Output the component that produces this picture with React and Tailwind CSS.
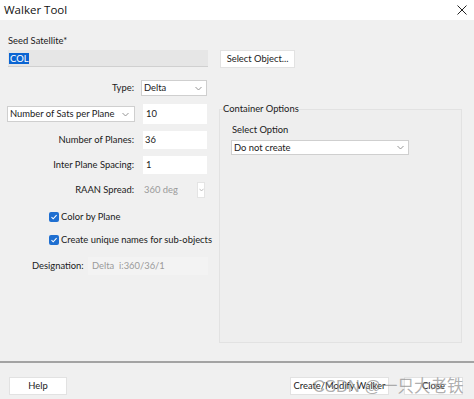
export default function App() {
  const Chevron = ({ className = "" }) => (
    <svg width="7" height="5" viewBox="0 0 7 5" className={className}>
      <path d="M0.5 1 L3.5 4 L6.5 1" fill="none" stroke="#8a8a8a" strokeWidth="0.9" />
    </svg>
  );
  const Check = () => (
    <span className="w-[10px] h-[10px] shrink-0 rounded-[2px] bg-[#1f6fd1] flex items-center justify-center">
      <svg width="8" height="8" viewBox="0 0 8 8">
        <path d="M1.5 4.2 L3.2 5.8 L6.6 2.2" fill="none" stroke="#ffffff" strokeWidth="1.1" />
      </svg>
    </span>
  );
  return (
    <div className="relative w-[474px] h-[399px] overflow-hidden bg-[#f0f0f0] text-[9.4px] leading-[12px] text-[#1a1a1a] whitespace-nowrap font-['Lato','Liberation_Sans',sans-serif]">
      {/* Title bar */}
      <div className="h-[20px] bg-white flex items-center justify-between pl-[4px] pr-[7px]">
        <span className="text-[11.5px] text-[#111] font-['Open_Sans',sans-serif]">Walker Tool</span>
        <svg width="10" height="10" viewBox="0 0 10 10">
          <path d="M0.5 0.5 L9.5 9.5 M9.5 0.5 L0.5 9.5" stroke="#222" strokeWidth="1" />
        </svg>
      </div>

      {/* Content */}
      <div className="h-[341px] flex flex-col px-[7px]">
        <div className="mt-[15px] pl-[1px] h-[12px]">Seed Satellite*</div>
        <div className="mt-[3px] flex items-start">
          <div className="ml-[1px] w-[200px] h-[17px] bg-[#e6e6e6] border-b border-[#d0d0d0] flex items-center">
            <span className="ml-[1px] bg-[#0a64d2] text-white px-[1px] h-[11px] leading-[11px]">COL</span>
          </div>
          <button className="ml-[12px] w-[75px] h-[18px] bg-white border border-[#e2e2e2] flex items-center justify-center">
            Select Object...
          </button>
        </div>

        <div className="mt-[12px] flex">
          {/* Left column */}
          <div className="w-[201px] flex flex-col">
            <div className="h-[16px] flex items-center">
              <span className="w-[127px] text-right">Type:</span>
              <div className="ml-[7px] w-[66px] h-[16px] bg-white border border-[#cfcfcf] flex items-center justify-between px-[2px]">
                <span>Delta</span>
                <Chevron className="mr-[2px]" />
              </div>
            </div>
            <div className="mt-[8px] h-[20px] flex items-center">
              <div className="w-[128px] h-[16px] bg-white border border-[#cfcfcf] flex items-center justify-between px-[2px]">
                <span>Number of Sats per Plane</span>
                <Chevron className="mr-[3px]" />
              </div>
              <div className="ml-[8px] w-[64px] h-[20px] bg-white flex items-center pl-[3px]">10</div>
            </div>
            <div className="mt-[7px] h-[18px] flex items-center">
              <span className="w-[127px] text-right">Number of Planes:</span>
              <div className="ml-[9px] w-[64px] h-[18px] bg-white flex items-center pl-[2px]">36</div>
            </div>
            <div className="mt-[7px] h-[18px] flex items-center">
              <span className="w-[127px] text-right">Inter Plane Spacing:</span>
              <div className="ml-[9px] w-[64px] h-[18px] bg-white flex items-center pl-[3px]">1</div>
            </div>
            <div className="mt-[8px] h-[16px] flex items-center">
              <span className="w-[127px] text-right">RAAN Spread:</span>
              <span className="ml-[10px] w-[53px] text-[#9a9a9a]">360 deg</span>
              <div className="w-[8px] h-[16px] bg-white border border-[#e4e4e4] flex items-center justify-center">
                <svg width="5" height="4" viewBox="0 0 5 4">
                  <path d="M0.5 0.8 L2.5 3 L4.5 0.8" fill="none" stroke="#b0b0b0" strokeWidth="0.8" />
                </svg>
              </div>
            </div>
            <div className="mt-[13px] h-[12px] flex items-center pl-[42px] gap-[2px]">
              <Check />
              <span>Color by Plane</span>
            </div>
            <div className="mt-[11px] h-[12px] flex items-center pl-[42px] gap-[2px]">
              <Check />
              <span>Create unique names for sub-objects</span>
            </div>
            <div className="mt-[11px] h-[18px] flex items-center">
              <span className="pl-[25px] w-[81px]">Designation:</span>
              <div className="w-[120px] h-[18px] bg-[#f3f3f3] flex items-center pl-[4px] text-[#9a9a9a]">
                Delta&nbsp;&nbsp;i:360/36/1
              </div>
            </div>
          </div>

          {/* Right column */}
          <fieldset className="ml-[11px] mt-[23px] w-[243px] h-[240px] border border-[#e2e2e2] px-[3px] bg-[#eeeeee]">
            <legend className="px-0 leading-[12px]">Container Options</legend>
            <div className="pl-[9px] mt-[9px] h-[12px]">Select Option</div>
            <div className="ml-[8px] mt-[4px] w-[178px] h-[15px] bg-white border border-[#cfcfcf] flex items-center justify-between px-[2px]">
              <span>Do not create</span>
              <Chevron className="mr-[2px]" />
            </div>
          </fieldset>
        </div>
      </div>

      {/* Separator */}
      <div className="h-[2px] bg-[#a3a3a3]" />

      {/* Footer */}
      <div className="flex items-center pt-[14px] px-[9px]">
        <button className="w-[58px] h-[18px] bg-white border border-[#e2e2e2]">Help</button>
        <div className="flex-1" />
        <button className="w-[99px] h-[18px] bg-white border border-[#e2e2e2]">Create/Modify Walker</button>
        <button className="ml-[15px] w-[59px] h-[18px] bg-white border border-[#e2e2e2] mr-[2px]">Close</button>
      </div>

      {/* Watermark */}
      <div className="absolute left-[313px] top-[375px] text-[16.5px] leading-[22px] text-[#8c8c8c]/70 font-['Liberation_Sans','Noto_Sans_CJK_SC',sans-serif] pointer-events-none">
        CSDN @一只大老铁
      </div>
    </div>
  );
}
